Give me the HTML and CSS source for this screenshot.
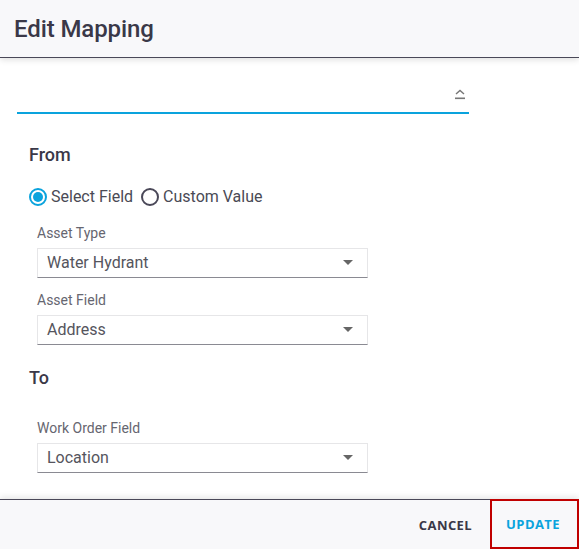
FILE: index.html
```html
<!DOCTYPE html>
<html>
<head>
<meta charset="utf-8">
<link rel="stylesheet" href="styles.css">
</head>
<body>
<div class="dialog">
  <header class="header">
    <h1 class="title">Edit Mapping</h1>
  </header>
  <main class="content">
    <div class="textfield">
      <span class="tf-icon">
        <svg width="12" height="12" viewBox="0 0 12 12"><path d="M2 5 L6 1.5 L10 5" fill="none" stroke="#777" stroke-width="1.4"/><rect x="1" y="8.5" width="10" height="1.6" fill="#777"/></svg>
      </span>
    </div>
    <h2 class="section">From</h2>
    <div class="radios">
      <label class="radio"><span class="dot checked"></span>Select Field</label>
      <label class="radio"><span class="dot"></span>Custom Value</label>
    </div>
    <div class="field first">
      <div class="label">Asset Type</div>
      <div class="select"><span>Water Hydrant</span><span class="caret"></span></div>
    </div>
    <div class="field">
      <div class="label">Asset Field</div>
      <div class="select"><span>Address</span><span class="caret"></span></div>
    </div>
    <h2 class="section to">To</h2>
    <div class="field wo">
      <div class="label">Work Order Field</div>
      <div class="select"><span>Location</span><span class="caret"></span></div>
    </div>
  </main>
  <footer class="footer">
    <button class="btn cancel">CANCEL</button>
    <button class="btn update">UPDATE</button>
  </footer>
</div>
</body>
</html>
```

FILE: styles.css
```css
* { box-sizing: border-box; }
html, body { margin: 0; padding: 0; background: #fff; }
body { font-family: Roboto, "Noto Sans", sans-serif; color: #3a3848; width: 579px; height: 549px; overflow: hidden; }
.dialog { display: flex; flex-direction: column; height: 549px; }
.header {
  height: 58px; background: #f8f8fa; border-bottom: 1.5px solid #4a4858;
  box-shadow: 0 2px 6px rgba(0,0,0,0.12); display: flex; align-items: center;
  padding-left: 14px; position: relative; z-index: 1; flex-shrink: 0;
}
.title { margin: 0; font-size: 24px; font-weight: 500; color: #3a3848; letter-spacing: -0.1px; }
.content { flex: 1; padding: 0 0 0 17px; }
.textfield {
  width: 452px; height: 56px; border-bottom: 2px solid #0aa3dd; display: flex;
  justify-content: flex-end; align-items: flex-end; padding: 0 3px 11px 0;
}
.tf-icon { display: flex; }
.section { margin: 30px 0 0 12px; font-size: 18px; font-weight: 500; color: #3a3848; line-height: 22px; }
.radios { display: flex; gap: 8px; margin: 21px 0 0 12px; }
.radio { display: flex; align-items: center; font-size: 16px; color: #4a4a55; gap: 4px; line-height: 20px; }
.dot { width: 18px; height: 18px; border-radius: 50%; border: 2px solid #4a4858; display: inline-block; position: relative; }
.dot.checked { border-color: #0aa3dd; }
.dot.checked::after { content: ""; position: absolute; left: 2px; top: 2px; width: 10px; height: 10px; border-radius: 50%; background: #0aa3dd; }
.field { margin: 14px 0 0 20px; }
.field.first { margin-top: 18px; }
.label { font-size: 14px; color: #666670; line-height: 16px; margin-bottom: 7px; }
.select {
  width: 331px; height: 30px; border: 1px solid #e6e6e8; border-bottom: 1.5px solid #8a8a92;
  display: flex; align-items: center; justify-content: space-between; padding: 0 14px 1px 9px;
  font-size: 16px; color: #55555d;
}
.caret { width: 0; height: 0; border-left: 5px solid transparent; border-right: 5px solid transparent; border-top: 5px solid #666; }
.section.to { margin-top: 22px; }
.field.wo { margin-top: 31px; }
.footer {
  height: 50px; background: #f8f8fa; border-top: 1.5px solid #4a4858; flex-shrink: 0;
  box-shadow: 0 -2px 6px rgba(0,0,0,0.10); display: flex; justify-content: flex-end; align-items: stretch;
}
.btn { background: none; border: none; font-family: "Open Sans", Roboto, sans-serif; font-size: 13px; font-weight: 700; letter-spacing: 0.4px; cursor: pointer; padding: 0; }
.cancel { color: #3a3848; margin-right: 18px; }
.update { color: #0aa3dd; width: 89px; border: 2px solid #c00000; margin-top: -1.5px; padding-right: 3px; }
```
